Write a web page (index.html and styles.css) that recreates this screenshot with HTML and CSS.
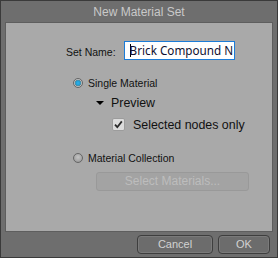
FILE: index.html
```html
<!DOCTYPE html>
<html>
<head>
<meta charset="utf-8">
<link rel="stylesheet" href="styles.css">
</head>
<body>
<div class="dialog">
  <div class="title">New Material Set</div>
  <div class="panel">
    <div class="name-row">
      <span class="label">Set Name:</span>
      <div class="field"><span class="caret"></span>Brick Compound N</div>
    </div>
    <div class="radio-row first">
      <span class="radio on"></span>
      <span class="small">Single Material</span>
    </div>
    <div class="preview-row">
      <span class="tri"></span>
      <span class="big">Preview</span>
    </div>
    <div class="check-row">
      <span class="check">
        <svg width="11" height="11" viewBox="0 0 11 11"><path d="M2 5.6 L4.3 8.2 L8.8 2.4" fill="none" stroke="#2a2a2a" stroke-width="1.8"/></svg>
      </span>
      <span class="big">Selected nodes only</span>
    </div>
    <div class="radio-row second">
      <span class="radio"></span>
      <span class="small">Material Collection</span>
    </div>
    <div class="sel-btn">Select Materials...</div>
  </div>
  <div class="footer">
    <div class="btn cancel">Cancel</div>
    <div class="btn ok">OK</div>
  </div>
</div>
</body>
</html>
```
FILE: styles.css
```css
html, body {
  margin: 0;
  padding: 0;
  background: #6e6e6e;
}
.dialog {
  width: 278px;
  height: 258px;
  box-sizing: border-box;
  border: 1px solid #3a3a3a;
  background: #6e6e6e;
  display: flex;
  flex-direction: column;
  font-family: "Liberation Sans", Arial, sans-serif;
}
.title {
  height: 21px;
  line-height: 22px;
  text-align: center;
  font-size: 12px;
  color: #c9c9c9;
}
.panel {
  margin: 0 4px;
  height: 210px;
  box-sizing: border-box;
  border: 1px solid #5e5e5e;
  background: #a9a9a9;
  display: flex;
  flex-direction: column;
  align-items: flex-start;
  padding-left: 67px;
  color: #111;
}
.name-row {
  margin-top: 18px;
  margin-left: -7px;
  height: 19px;
  display: flex;
  align-items: center;
  gap: 8px;
}
.label {
  font-size: 10.5px;
  padding-top: 3px;
}
.field {
  width: 111px;
  height: 19px;
  box-sizing: border-box;
  border: 1px solid #1c7cd8;
  background: #fff;
  font-family: "Noto Sans", "Open Sans", sans-serif;
  font-size: 11.7px;
  line-height: 17px;
  color: #101030;
  padding-left: 5px;
  white-space: nowrap;
  overflow: hidden;
  display: flex;
  align-items: center;
}
.caret {
  display: inline-block;
  width: 1px;
  height: 13px;
  background: #000;
  margin-right: -1px;
}
.radio-row {
  height: 15px;
  display: flex;
  align-items: center;
  gap: 5px;
}
.radio-row.first { margin-top: 15px; }
.radio-row.second { margin-top: 18px; }
.radio {
  width: 10px;
  height: 10px;
  box-sizing: border-box;
  border-radius: 50%;
  border: 1px solid #666;
  background: radial-gradient(circle at 50% 40%, #c4c4c4 0, #a6a6a6 60%, #8a8a8a 100%);
}
.radio.on {
  background: radial-gradient(circle, #2fb2ea 0, #1e9fd8 2px, #5a8a98 3px, #c2c2c2 3.6px, #9a9a9a 100%);
}
.small {
  font-size: 10.5px;
}
.big {
  font-size: 12.4px;
}
.preview-row {
  margin-top: 5px;
  margin-left: 23px;
  height: 15px;
  display: flex;
  align-items: center;
  gap: 7px;
}
.tri {
  width: 0;
  height: 0;
  border-left: 4px solid transparent;
  border-right: 4px solid transparent;
  border-top: 4px solid #000;
  margin-top: 1px;
}
.check-row {
  margin-top: 7px;
  margin-left: 39px;
  height: 15px;
  display: flex;
  align-items: center;
  gap: 8px;
}
.check {
  width: 13px;
  height: 13px;
  box-sizing: border-box;
  border: 1px solid #9c9c9c;
  border-radius: 2px;
  background: #dcdcdc;
  display: flex;
  align-items: center;
  justify-content: center;
}
.check svg { display: block; }
.sel-btn {
  margin-top: 7px;
  margin-left: 23px;
  width: 153px;
  height: 19px;
  box-sizing: border-box;
  border: 1px solid #999;
  border-radius: 3px;
  background: #a3a3a3;
  color: #bdbdbd;
  font-size: 12px;
  line-height: 17px;
  text-align: center;
}
.footer {
  display: flex;
  justify-content: flex-end;
  gap: 5px;
  padding: 3px 7px 0 0;
}
.btn {
  height: 19px;
  box-sizing: border-box;
  border: 1px solid #3e3e3e;
  border-radius: 4px;
  background: #6c6c6c;
  box-shadow: inset 0 0 0 1px #7a7a7a;
  color: #d2d2d2;
  font-size: 11px;
  line-height: 17px;
  text-align: center;
}
.cancel { width: 76px; }
.ok { width: 52px; }
```
